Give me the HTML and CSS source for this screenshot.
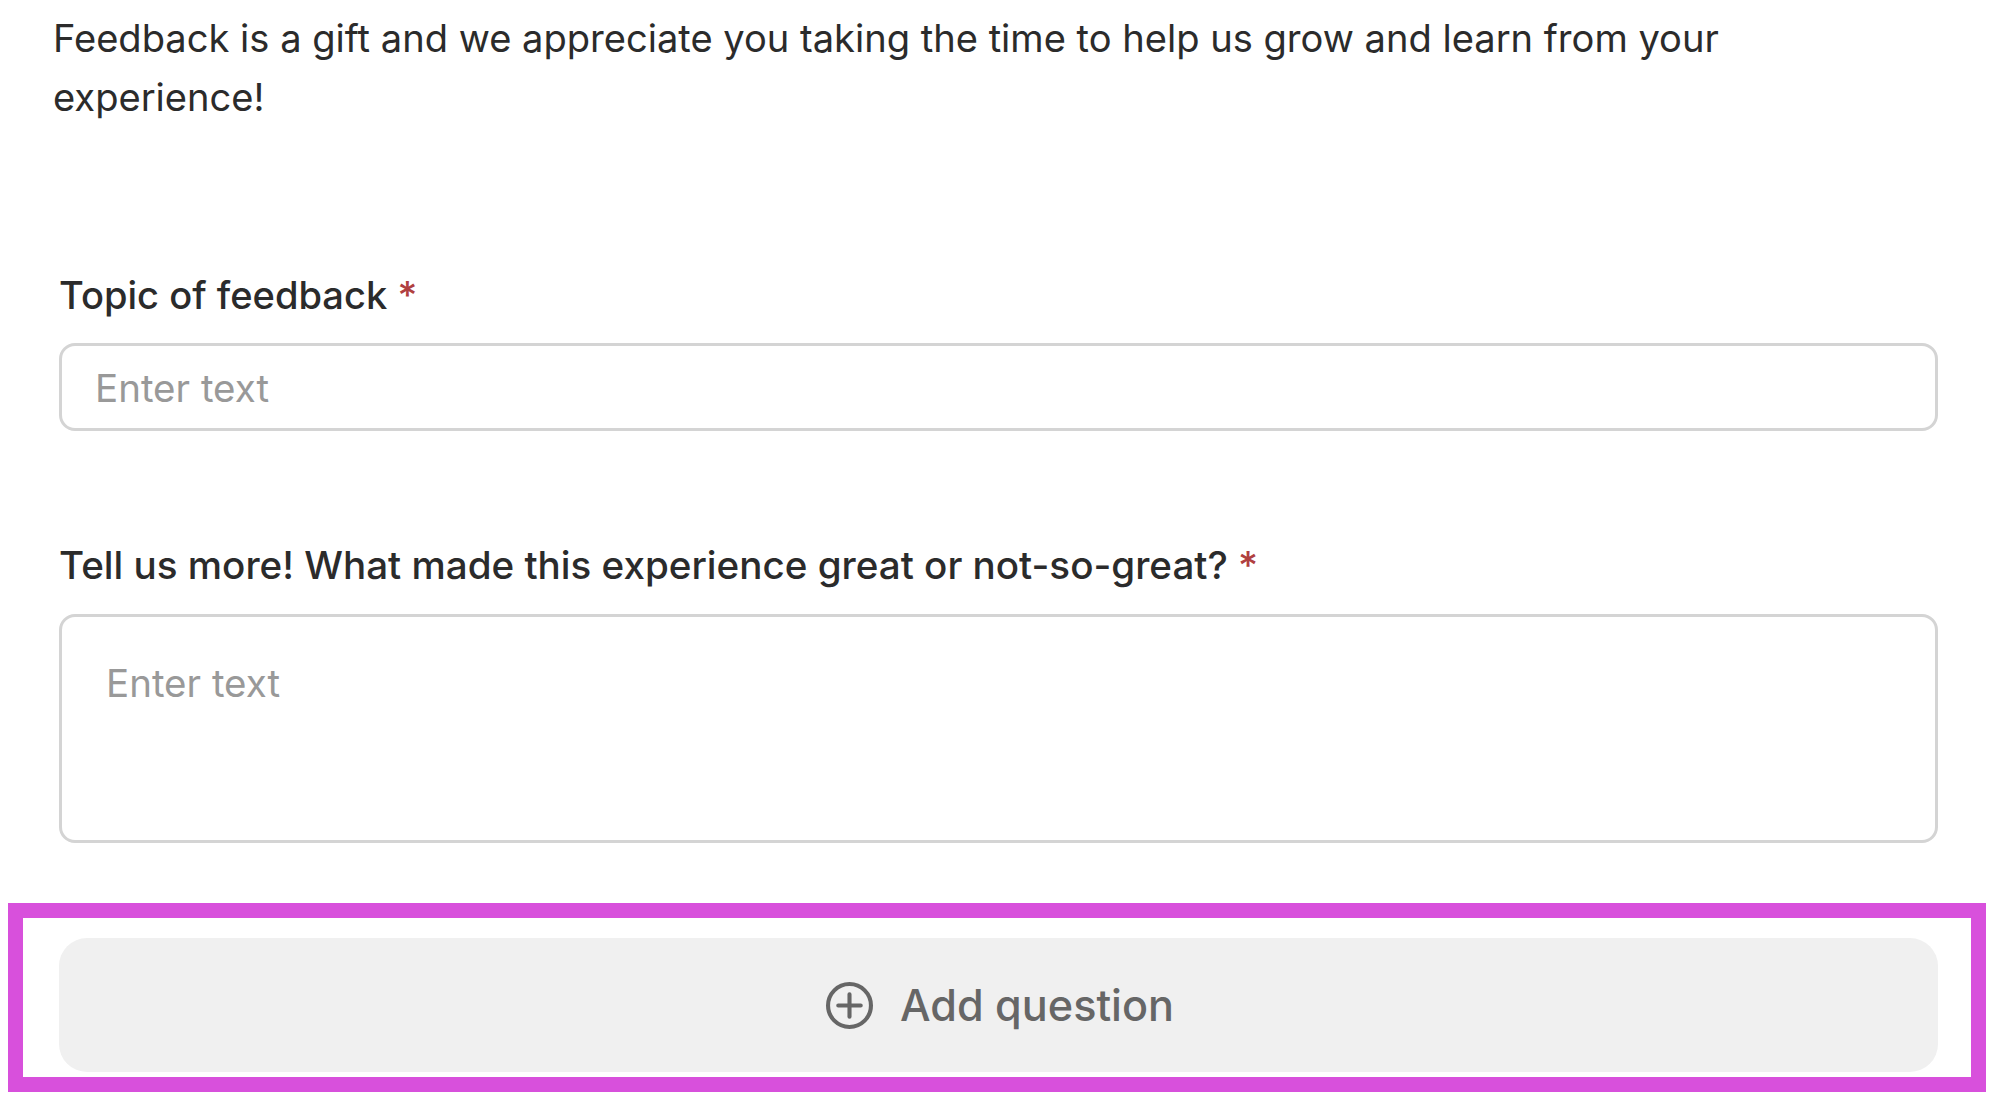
FILE: index.html
```html
<!DOCTYPE html>
<html lang="en">
<head>
    <meta charset="UTF-8">
    <meta name="viewport" content="width=device-width, initial-scale=1.0">
    <title>Feedback</title>
    <link rel="stylesheet" href="styles.css">
</head>
<body>
    <main class="feedback-page">
        <p class="intro-text">Feedback is a gift and we appreciate you taking the time to help us grow and learn from your experience!</p>

        <form class="feedback-form">
            <div class="form-field topic-field">
                <label class="field-label" for="topic">Topic of feedback <span class="required-mark">*</span></label>
                <input id="topic" class="text-input" type="text" placeholder="Enter text">
            </div>

            <div class="form-field details-field">
                <label class="field-label" for="details">Tell us more! What made this experience great or not-so-great? <span class="required-mark">*</span></label>
                <textarea id="details" class="text-area" placeholder="Enter text"></textarea>
            </div>

            <div class="highlight-box">
                <button class="add-button" type="button">
                    <svg class="add-icon" viewBox="0 0 46 46" width="47" height="47" aria-hidden="true">
                        <circle cx="23" cy="23" r="21" fill="none" stroke="currentColor" stroke-width="4"/>
                        <path d="M23 12v22M12 23h22" fill="none" stroke="currentColor" stroke-width="4" stroke-linecap="round"/>
                    </svg>
                    <span>Add question</span>
                </button>
            </div>
        </form>
    </main>
</body>
</html>
```

FILE: styles.css
```css
:root {
    --text-color: #2b2b2b;
    --muted-color: #666666;
    --placeholder-color: #999999;
    --border-color: #d4d4d4;
    --button-color: #f0f0f0;
    --highlight-color: #d850dc;
    --required-color: #b04040;
}

* {
    box-sizing: border-box;
}

body {
    margin: 0;
    background: #ffffff;
    color: var(--text-color);
    font-family: Inter, "Liberation Sans", sans-serif;
}

.feedback-page {
    padding: 9px 13px 0 8px;
}

.intro-text {
    width: 1880px;
    margin: 0 0 0 45px;
    font-size: 38.1px;
    line-height: 59px;
}

.feedback-form {
    margin-top: 146px;
}

.form-field {
    margin-left: 51px;
    margin-right: 48px;
}

.details-field {
    margin-top: 112px;
}

.field-label {
    display: block;
    margin-bottom: 26px;
    font-size: 38.6px;
    font-weight: 500;
    line-height: 44px;
}

.topic-field .field-label {
    font-size: 38.1px;
}

.details-field .field-label {
    margin-bottom: 27px;
}

.required-mark {
    color: var(--required-color);
}

.text-input,
.text-area {
    display: block;
    width: 100%;
    border: 3px solid var(--border-color);
    border-radius: 16px;
    background: #ffffff;
    color: var(--text-color);
    font-family: inherit;
    font-size: 38.5px;
    outline: none;
}

.text-input {
    height: 88px;
    padding: 2px 33px 0;
}

.text-area {
    height: 229px;
    padding: 44px 44px;
    line-height: 44px;
    resize: none;
}

.text-input::placeholder,
.text-area::placeholder {
    color: var(--placeholder-color);
    opacity: 1;
}

.highlight-box {
    height: 189px;
    margin-top: 60px;
    padding: 20px 33px 5px 36px;
    border: 15px solid var(--highlight-color);
}

.add-button {
    display: flex;
    align-items: center;
    justify-content: center;
    gap: 27px;
    width: 100%;
    height: 134px;
    padding: 0 0 0 3px;
    border: none;
    border-radius: 28px;
    background: var(--button-color);
    color: var(--muted-color);
    font-family: inherit;
    font-size: 43.2px;
    font-weight: 500;
}
```
